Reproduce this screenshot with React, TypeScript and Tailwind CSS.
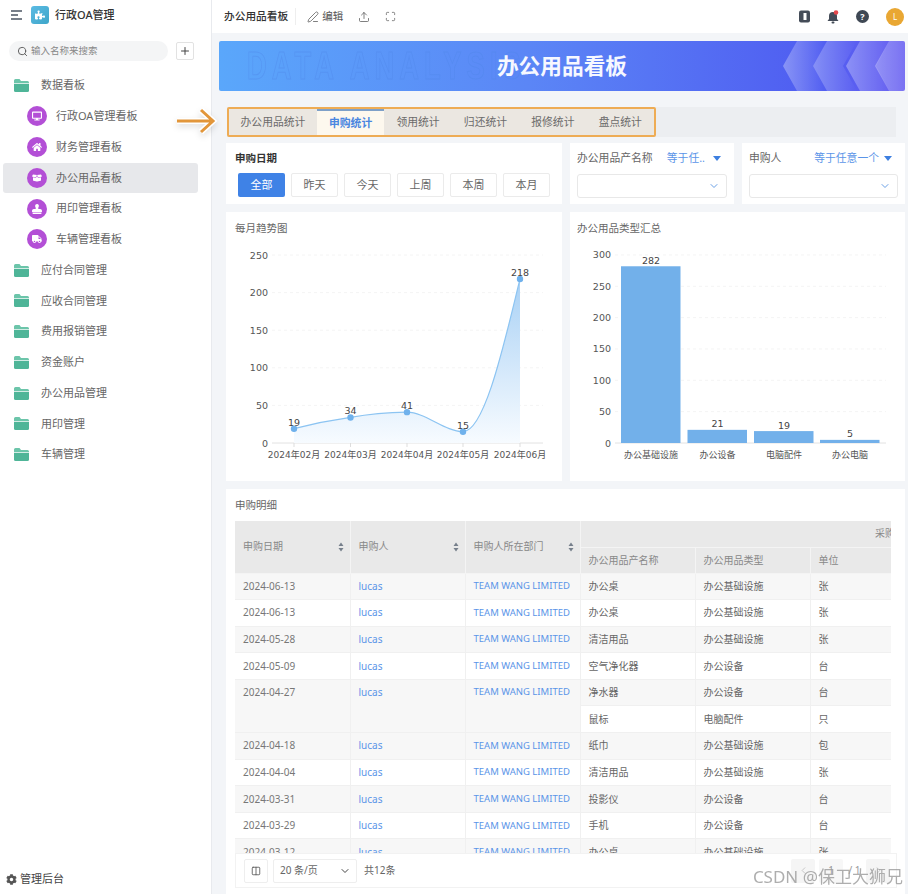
import { ChevronDown, ChevronLeft, ChevronRight, Columns2, Maximize, PenLine, Plus, Search, Upload } from "lucide-react";
import { FaBoxOpen, FaCog, FaDesktop, FaHome, FaPuzzlePiece, FaStamp, FaTruck } from "react-icons/fa";

const dashboards = [
	{ label: "行政OA管理看板", Icon: FaDesktop },
	{ label: "财务管理看板", Icon: FaHome },
	{ label: "办公用品看板", Icon: FaBoxOpen, active: true },
	{ label: "用印管理看板", Icon: FaStamp },
	{ label: "车辆管理看板", Icon: FaTruck },
];

const folders = ["应付合同管理", "应收合同管理", "费用报销管理", "资金账户", "办公用品管理", "用印管理", "车辆管理"];
const tabs = ["办公用品统计", "申购统计", "领用统计", "归还统计", "报修统计", "盘点统计"];
const ranges = ["全部", "昨天", "今天", "上周", "本周", "本月"];

const rows = [
	["2024-06-13", "办公桌", "办公基础设施", "张"],
	["2024-06-13", "办公桌", "办公基础设施", "张"],
	["2024-05-28", "清洁用品", "办公基础设施", "张"],
	["2024-05-09", "空气净化器", "办公设备", "台"],
	["2024-04-27", "净水器", "办公设备", "台"],
	["", "鼠标", "电脑配件", "只"],
	["2024-04-18", "纸巾", "办公基础设施", "包"],
	["2024-04-04", "清洁用品", "办公基础设施", "张"],
	["2024-03-31", "投影仪", "办公设备", "台"],
	["2024-03-29", "手机", "办公设备", "台"],
	["2024-03-12", "办公桌", "办公基础设施", "张"],
];

const FolderIcon = () => (
	<svg width="15" height="13" viewBox="0 0 15 13" className="shrink-0">
		<path d="M1.5 0h4l1.5 2h6.5A1.5 1.5 0 0 1 15 3.5V4H0V1.5A1.5 1.5 0 0 1 1.5 0z" fill="#6cc5aa" />
		<path d="M0 4.8h15v6.7a1.5 1.5 0 0 1-1.5 1.5h-12A1.5 1.5 0 0 1 0 11.500z" fill="#4fb598" />
	</svg>
);

const SortIcon = () => (
	<svg width="6" height="10" viewBox="0 0 6 10" className="shrink-0">
		<path d="M3 0.500L5.500 4H0.500zM3 9.500L0.500 6H5.500z" fill="#77808c" />
	</svg>
);

const Sidebar = () => (
	<aside className="flex h-full w-[212px] shrink-0 flex-col border-r border-[#e8eaee] bg-white">
		<div className="flex h-[29px] items-center pl-[11px] pt-[1px]">
			<svg width="12" height="10" viewBox="0 0 12 10">
				<path d="M0 1h11M0 5h7M0 9h11" stroke="#4b5563" strokeWidth="1.300" />
			</svg>
			<div className="ml-2 flex h-[18px] w-[18px] items-center justify-center rounded-[3px] bg-gradient-to-br from-[#5bbbe4] to-[#3ea6c9]">
				<FaPuzzlePiece className="text-[10px] text-white" />
			</div>
			<span className="ml-[6px] text-[11px] font-medium text-[#333]">行政OA管理</span>
		</div>
		<div className="mt-3 flex items-center pl-[9px]">
			<div className="flex h-5 w-[159px] items-center rounded-full bg-[#f4f5f6] pl-2 text-[9.500px] text-[#888]">
				<Search size={11} className="mr-[3px] text-[#555]" />
				输入名称来搜索
			</div>
			<div className="ml-2 flex h-[18px] w-[18px] items-center justify-center rounded-[2px] border border-[#e2e2e2]">
				<Plus size={12} className="text-[#444]" />
			</div>
		</div>
		<div className="mt-[9px] flex flex-col text-[11px] text-[#666]">
			<div className="flex h-[31px] items-center pl-[14px]">
				<FolderIcon />
				<span className="ml-[12px]">数据看板</span>
			</div>
			{dashboards.map(({ label, Icon, active }) => (
				<div
					key={label}
					className={`mx-[3px] flex h-[30.750px] w-[195px] items-center rounded-[3px] pl-[24px] ${active ? "bg-[#e7e8eb]" : ""}`}
				>
					<div className="flex h-5 w-5 shrink-0 items-center justify-center rounded-full bg-[#b34fd6]">
						<Icon className="text-[10px] text-white" />
					</div>
					<span className="ml-[9px]">{label}</span>
				</div>
			))}
			{folders.map((label) => (
				<div key={label} className="flex h-[30.750px] items-center pl-[14px]">
					<FolderIcon />
					<span className="ml-[12px]">{label}</span>
				</div>
			))}
		</div>
		<div className="mt-auto flex h-[30px] items-center pl-[6px] text-[11px] text-[#444]">
			<FaCog className="mr-[3px] text-[11px] text-[#555]" />
			管理后台
		</div>
	</aside>
);

const TopBar = () => (
	<header className="flex h-[33px] shrink-0 items-center bg-white pl-3 pr-[4px] text-[#555]">
		<span className="border-r border-[#eee] pr-[7px] text-[10.700px] font-medium text-[#333]">办公用品看板</span>
		<PenLine size={12} className="ml-[11px]" strokeWidth={1.500} />
		<span className="ml-[3px] text-[10.500px]">编辑</span>
		<Upload size={12} className="ml-[15px]" strokeWidth={1.500} />
		<Maximize size={11} className="ml-[15px]" strokeWidth={1.500} />
		<div className="ml-auto flex items-center">
			<svg width="13" height="13" viewBox="0 0 13 13">
				<rect x="1" y="0.500" width="11" height="12" rx="2" fill="#444c58" />
				<rect x="5.500" y="3" width="3" height="7" fill="#fff" />
			</svg>
			<svg width="13" height="14" viewBox="0 0 13 14" className="ml-[16px]">
				<path d="M6 2a4 4 0 0 1 4 4v3l1.500 2H.500L2 9V6a4 4 0 0 1 4-4z" fill="#444c58" />
				<rect x="4.500" y="11.500" width="3" height="2" rx="1" fill="#444c58" />
				<circle cx="9" cy="2.500" r="2.300" fill="#e5484d" />
			</svg>
			<div className="ml-[16px] flex h-[13px] w-[13px] items-center justify-center rounded-full bg-[#3f4854] text-[9px] font-bold text-white">?</div>
			<div className="ml-[17px] flex h-[18px] w-[18px] items-center justify-center rounded-full bg-[#e9a733] text-[8px] text-white">L</div>
		</div>
	</header>
);

const Banner = () => (
	<div className="relative ml-[7px] mr-[3px] flex h-[50px] shrink-0 items-center justify-center overflow-hidden rounded-[2px] bg-[linear-gradient(90deg,#5aa7fb_0%,#5b86f6_45%,#4f5cf1_88%,#6b62f1_100%)]">
		<span className="absolute left-[28px] top-[2px] origin-left scale-x-[0.72] whitespace-nowrap text-[38px] font-bold leading-[46px] tracking-[7px] text-transparent opacity-40 [-webkit-text-stroke:1px_#4f86e8] [font-family:'Liberation_Sans',sans-serif]">
			DATA ANALYSIS
		</span>
		<span className="relative text-[21.700px] font-bold text-[#f6f8ff]">办公用品看板</span>
		<svg width="130" height="50" viewBox="0 0 130 50" className="absolute right-0 top-0">
			<defs>
				<linearGradient id="chev" x1="0" x2="1" y1="0" y2="0">
					<stop offset="0" stopColor="#fff" stopOpacity="0.320" />
					<stop offset="1" stopColor="#fff" stopOpacity="0" />
				</linearGradient>
			</defs>
			{[8, 38, 71, 100].map((x) => (
				<polygon
					key={x}
					points={`${x},25 ${x + 14},0 ${x + 44},0 ${x + 30},25 ${x + 44},50 ${x + 14},50`}
					fill="url(#chev)"
				/>
			))}
		</svg>
	</div>
);

const TabBar = () => (
	<div className="ml-[15px] mr-[12px] mt-4 flex h-[30px] shrink-0 bg-[#eceef1]">
		<div className="flex h-[30px] w-[429px] items-stretch rounded-[2px] border-2 border-[#eeac55] bg-[#ebe7e1] text-[10.800px] text-[#6b6b6b]">
			{tabs.map((tab, i) => (
				<div
					key={tab}
					className={`flex items-center justify-center ${i === 0 ? "w-[88px]" : "w-[67.500px]"} ${i === 1 ? "border-t-2 border-[#7ea0c8] bg-[#fdf8ee] font-semibold text-[#4a86e0]" : ""}`}
				>
					{tab}
				</div>
			))}
		</div>
	</div>
);

const FilterSelect = ({ label, op, gap }: { label: string; op: string; gap: string }) => (
	<div className="h-[61px] bg-white px-[7px] pt-[6px]">
		<div className="flex h-[18px] items-center justify-between pr-[6px] text-[10.800px]">
			<span className="text-[#666]">{label}</span>
			<span className="flex items-center text-[#5b95e8]">
				{op}
				<span className={`h-0 w-0 border-x-[4px] border-t-[5px] border-x-transparent border-t-[#3d7fe0] ${gap}`} />
			</span>
		</div>
		<div className="mt-[7px] flex h-6 items-center justify-end rounded-[3px] border border-[#e8e8e8] pr-[6px]">
			<ChevronDown size={12} className="text-[#6aa0e6]" />
		</div>
	</div>
);

const Filters = () => (
	<div className="ml-[14px] mr-[3px] mt-[6px] flex h-[61px] shrink-0 gap-2">
		<div className="w-[336px] bg-white pl-[9px] pt-2">
			<div className="text-[10.500px] font-semibold leading-[15px] text-[#333]">申购日期</div>
			<div className="mt-[7px] flex gap-[6px] pl-[3px]">
				{ranges.map((r, i) => (
					<div
						key={r}
						className={`flex h-6 w-[47px] items-center justify-center rounded-[2px] text-[11px] ${i === 0 ? "bg-[#3f82e6] text-white" : "border border-[#ebebeb] text-[#666]"}`}
					>
						{r}
					</div>
				))}
			</div>
		</div>
		<div className="w-[164px]">
			<FilterSelect label="办公用品产名称" op="等于任.." gap="ml-2" />
		</div>
		<div className="w-[163px]">
			<FilterSelect label="申购人" op="等于任意一个" gap="ml-[5px]" />
		</div>
	</div>
);

const chartText = "[font-family:'DejaVu_Sans','Noto_Sans_CJK_SC',sans-serif]";

const TrendChart = () => {
	const months = ["2024年02月", "2024年03月", "2024年04月", "2024年05月", "2024年06月"];
	const xs = [294, 350.5, 407, 463, 520];
	const vals = [19, 34, 41, 15, 218];
	const y = (v: number) => 443 - v * 0.752;
	const line =
		"M294,428.700 C312,424 332,420 350.500,417.400 C370,414 390,412.500 407,412.200 C425,412 445,431.700 463,431.700 C485,431.700 505,340 520,279";
	return (
		<svg width="336" height="245" viewBox="226 236 336 245" className={chartText}>
			<defs>
				<linearGradient id="area" x1="0" x2="0" y1="0" y2="1">
					<stop offset="0" stopColor="#a9d1f5" />
					<stop offset="1" stopColor="#f7fbff" />
				</linearGradient>
			</defs>
			{[0, 50, 100, 150, 200, 250].map((v) => (
				<g key={v}>
					<line x1="272" x2="543" y1={y(v)} y2={y(v)} stroke={v === 0 ? "#e2e2e2" : "#f4f4f4"} strokeDasharray={v === 0 ? undefined : "3 3"} />
					<text x="268" y={y(v) + 3.500} textAnchor="end" fontSize="9.500" fill="#555">{v}</text>
				</g>
			))}
			<path d={`${line} L520,443 L294,443 Z`} fill="url(#area)" />
			<path d={line} fill="none" stroke="#8cc4f2" strokeWidth="1.200" />
			{xs.map((x, i) => (
				<g key={x}>
					<line x1={x} x2={x} y1="443" y2="447" stroke="#ddd" />
					<circle cx={x} cy={y(vals[i])} r="3.200" fill="#6fb1ec" />
					<text x={x} y={y(vals[i]) - 3} textAnchor="middle" fontSize="9.500" fill="#444">{vals[i]}</text>
					<text x={x} y="458" textAnchor="middle" fontSize="9" fill="#555">{months[i]}</text>
				</g>
			))}
		</svg>
	);
};

const TypeChart = () => {
	const bars = [
		{ x: 621, v: 282, label: "办公基础设施" },
		{ x: 687.500, v: 21, label: "办公设备" },
		{ x: 754, v: 19, label: "电脑配件" },
		{ x: 820, v: 5, label: "办公电脑" },
	];
	const y = (v: number) => 443 - v * 0.6267;
	return (
		<svg width="335" height="245" viewBox="570 236 335 245" className={chartText}>
			{[0, 50, 100, 150, 200, 250, 300].map((v) => (
				<g key={v}>
					<line x1="615" x2="886" y1={y(v)} y2={y(v)} stroke={v === 0 ? "#e2e2e2" : "#f4f4f4"} strokeDasharray={v === 0 ? undefined : "3 3"} />
					<text x="611" y={y(v) + 3.500} textAnchor="end" fontSize="9.500" fill="#555">{v}</text>
				</g>
			))}
			{bars.map((b) => (
				<g key={b.label}>
					<rect x={b.x} y={y(b.v)} width="59.500" height={443 - y(b.v)} fill="#72b0ea" />
					<text x={b.x + 30} y={y(b.v) - 2.500} textAnchor="middle" fontSize="9.500" fill="#444">{b.v}</text>
					<text x={b.x + 30} y="458" textAnchor="middle" fontSize="9" fill="#555">{b.label}</text>
				</g>
			))}
		</svg>
	);
};

const Charts = () => (
	<div className="ml-[14px] mr-[3px] mt-2 flex h-[269px] shrink-0 gap-2">
		<div className="w-[336px] bg-white">
			<div className="pl-[9px] pt-[8px] text-[10.500px] leading-[16px] text-[#666]">每月趋势图</div>
			<TrendChart />
		</div>
		<div className="w-[335px] bg-white">
			<div className="pl-[7px] pt-[8px] text-[10.500px] leading-[16px] text-[#666]">办公用品类型汇总</div>
			<TypeChart />
		</div>
	</div>
);

const thClass = "border-r border-b border-[#f4f4f4] bg-[#e9e9e9] pl-2 text-left text-[10px] font-normal text-[#888]";

const SortHead = ({ label }: { label: string }) => (
	<th rowSpan={2} className={thClass}>
		<div className="flex items-center justify-between pr-[6px]">
			{label}
			<SortIcon />
		</div>
	</th>
);

const DetailTable = () => (
	<div className="h-[332px] w-[656px] overflow-hidden">
		<table className="w-[975px] table-fixed border-collapse">
			<colgroup>
				<col className="w-[115px]" />
				<col className="w-[115px]" />
				<col className="w-[115px]" />
				<col className="w-[115px]" />
				<col className="w-[115px]" />
				<col className="w-[115px]" />
				<col className="w-[285px]" />
			</colgroup>
			<thead>
				<tr className="h-[26px]">
					<SortHead label="申购日期" />
					<SortHead label="申购人" />
					<SortHead label="申购人所在部门" />
					<th colSpan={4} className={`${thClass} !pl-0 !text-center`}>采购明细</th>
				</tr>
				<tr className="h-[26px]">
					<th className={thClass}>办公用品产名称</th>
					<th className={thClass}>办公用品类型</th>
					<th className={thClass}>单位</th>
					<th className={thClass} />
				</tr>
			</thead>
			<tbody className="text-[10px]">
				{rows.map(([date, name, type, unit], i) => {
					const merged = i === 4;
					const cell = `border-r border-b border-[#f0f0f0] pl-2 ${i % 2 === 0 ? "bg-[#f7f7f7]" : "bg-white"}`;
					const top = merged ? "align-top pt-[5px]" : "";
					return (
						<tr key={i} className="h-[26.600px]">
							{date ? (
								<>
									<td rowSpan={merged ? 2 : 1} className={`${cell} ${top} text-[#777]`}>{date}</td>
									<td rowSpan={merged ? 2 : 1} className={`${cell} ${top} text-[#5b95e8]`}>lucas</td>
									<td rowSpan={merged ? 2 : 1} className={`${cell} ${top} whitespace-nowrap text-[9.500px] text-[#5b95e8]`}>TEAM WANG LIMITED</td>
								</>
							) : null}
							<td className={`${cell} text-[#666]`}>{name}</td>
							<td className={`${cell} text-[#666]`}>{type}</td>
							<td className={`${cell} text-[#666]`}>{unit}</td>
							<td className={cell} />
						</tr>
					);
				})}
			</tbody>
		</table>
	</div>
);

const Pager = () => (
	<div className="flex h-[35px] w-[662px] items-center border border-[#f2f2f2] pl-2 pr-[6px] text-[10px] text-[#666]">
		<div className="flex h-6 w-6 items-center justify-center rounded-[2px] border border-[#eeeeee]">
			<Columns2 size={10} className="text-[#555]" />
		</div>
		<div className="ml-[5px] flex h-6 w-[84px] items-center justify-between rounded-[2px] border border-[#eeeeee] pl-[6px] pr-[5px]">
			20 条/页
			<ChevronDown size={12} className="text-[#444]" />
		</div>
		<span className="ml-[7px]">共12条</span>
		<div className="ml-auto flex items-center text-[#999]">
			<div className="flex h-6 w-6 items-center justify-center rounded-[2px] bg-[#f5f5f5]">
				<ChevronLeft size={11} className="text-[#c4c4c4]" />
			</div>
			<div className="ml-1 flex h-6 w-6 items-center justify-center rounded-[2px] bg-[#f7f7f7]">1</div>
			<span className="mx-1 w-[15px] text-center">/ 1</span>
			<div className="flex h-6 w-6 items-center justify-center rounded-[2px] bg-[#f5f5f5]">
				<ChevronRight size={11} className="text-[#c4c4c4]" />
			</div>
		</div>
	</div>
);

export default function App() {
	return (
		<div className="relative flex h-[894px] w-[908px] overflow-hidden bg-white [font-family:'Noto_Sans','Noto_Sans_CJK_SC',sans-serif]">
			<Sidebar />
			<main className="flex min-w-0 flex-1 flex-col bg-[#f3f5f8]">
				<TopBar />
				<div className="mt-2">
					<Banner />
				</div>
				<TabBar />
				<Filters />
				<Charts />
				<section className="ml-[14px] mr-[3px] mt-2 flex-1 bg-white px-[9px]">
					<div className="h-[32px] pt-[8px] text-[10.500px] leading-[16px] text-[#666]">申购明细</div>
					<DetailTable />
					<Pager />
				</section>
			</main>
			{/* callout arrow over the tab strip */}
			<svg width="44" height="30" viewBox="0 0 44 30" className="absolute left-[174px] top-[106px] drop-shadow-md">
				<path d="M3 15H38M27 4l12 11-12 11" fill="none" stroke="#fff" strokeWidth="6" />
				<path d="M3 15H38M27 4l12 11-12 11" fill="none" stroke="#e2963a" strokeWidth="3" />
			</svg>
			<span className="absolute bottom-[5px] right-[5px] text-[17px] text-[#9a9a9a] opacity-80">CSDN @保卫大狮兄</span>
		</div>
	);
}
